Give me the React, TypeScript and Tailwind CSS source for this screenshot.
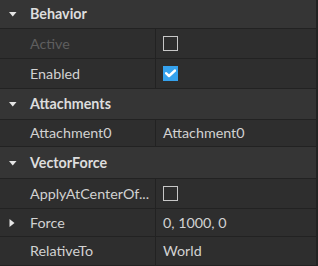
import React from "react";

type Row =
  | { kind: "header"; label: string; h: string }
  | { kind: "prop"; label: string; value: React.ReactNode; h: string; dim?: boolean; expand?: boolean };

function Checkbox({ checked }: { checked?: boolean }) {
  if (checked) {
    return (
      <span className="flex h-[15px] w-[15px] items-center justify-center bg-[#35a2ee]">
        <svg width="11" height="9" viewBox="0 0 11 9">
          <path d="M1 4.2 L4 7 L10 1.5" stroke="#fff" strokeWidth="2.4" fill="none" strokeLinecap="round" strokeLinejoin="round" />
        </svg>
      </span>
    );
  }
  return <span className="block h-[15px] w-[15px] border border-[#c8c8c8]" />;
}

const rows: Row[] = [
  { kind: "header", label: "Behavior", h: "h-[29px]" },
  { kind: "prop", label: "Active", value: <Checkbox />, h: "h-[30px]", dim: true },
  { kind: "prop", label: "Enabled", value: <Checkbox checked />, h: "h-[30px]" },
  { kind: "header", label: "Attachments", h: "h-[31px]" },
  { kind: "prop", label: "Attachment0", value: "Attachment0", h: "h-[27px]" },
  { kind: "header", label: "VectorForce", h: "h-[32px]" },
  { kind: "prop", label: "ApplyAtCenterOf...", value: <Checkbox />, h: "h-[30px]" },
  { kind: "prop", label: "Force", value: "0, 1000, 0", h: "h-[28px]", expand: true },
  { kind: "prop", label: "RelativeTo", value: "World", h: "h-[29px]" },
];

export default function App() {
  return (
    <div
      className="h-[266px] w-[318px] overflow-hidden border-r-2 border-[#232323] bg-[#2e2e2e] text-[14.3px]"
      style={{ fontFamily: "Lato, 'Noto Sans', sans-serif" }}
    >
      {rows.map((r) =>
        r.kind === "header" ? (
          <div key={r.label} className={`${r.h} flex items-center border-b border-[#222] bg-[#353535]`}>
            <svg width="30" height="10" viewBox="0 0 30 10" className="shrink-0">
              <path d="M9 3 L16.5 3 L12.75 7.5 Z" fill="#e6e6e6" />
            </svg>
            <span className="font-bold text-[#dddddd]">{r.label}</span>
          </div>
        ) : (
          <div key={r.label} className={`${r.h} flex items-stretch border-b border-[#222]`}>
            <div className="flex w-[156px] items-center border-r border-[#222]">
              <span className="flex w-[30px] shrink-0 pl-[9px]">
                {r.expand && (
                  <svg width="6" height="10" viewBox="0 0 6 10">
                    <path d="M0.5 1 L5.5 5 L0.5 9 Z" fill="#e6e6e6" />
                  </svg>
                )}
              </span>
              <span className={r.dim ? "text-[#5e5e5e]" : "text-[#d2d2d2]"}>{r.label}</span>
            </div>
            <div className="flex flex-1 items-center pl-[7px] text-[#d2d2d2]">{r.value}</div>
          </div>
        )
      )}
    </div>
  );
}
